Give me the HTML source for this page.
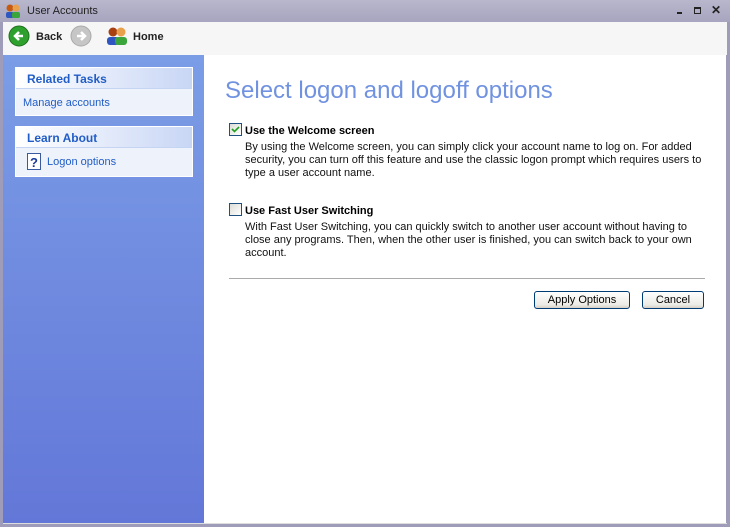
<!DOCTYPE html>
<html><head><style>
*{margin:0;padding:0;box-sizing:border-box}
body{width:730px;height:527px;position:relative;overflow:hidden;background:#9e9cb8;font-family:"Liberation Sans",sans-serif;font-size:11px}
.title{position:absolute;left:0;top:0;width:730px;height:22px;background:linear-gradient(#b9b7cc,#a7a5bf);}
.title span{position:absolute;left:27px;top:5px;color:#222;font-size:11px}
.tb{position:absolute;left:3px;top:22px;width:724px;height:33px;background:#f6f6f6}
.left{position:absolute;left:3px;top:55px;width:201px;height:468px;background:linear-gradient(#7b9de6,#6377d8)}
.main{position:absolute;left:204px;top:55px;width:522px;height:468px;background:#fff}
.box{position:absolute;left:12px;width:178px;background:#eef2fb;border:1px solid #fff}
.box .h{height:21px;background:linear-gradient(90deg,#fff,#c8d6f5);color:#215dc6;font-weight:bold;font-size:12px;padding:4px 0 0 11px;border-bottom:1px solid #c6d4f3}
.box .b{color:#215dc6;padding:8px 0 0 7px;height:26px}
h1{position:absolute;left:21px;top:22px;font-size:24px;font-weight:normal;color:#7092e0;white-space:nowrap}
.cb{position:absolute;width:13px;height:13px;border:1px solid #1c5180;background:linear-gradient(135deg,#dcdcd7,#fff)}
.lbl{position:absolute;font-weight:bold;color:#000}
.p{position:absolute;left:41px;width:466px;line-height:13px;color:#111}
.btn{position:absolute;height:18px;border:1px solid #003c74;border-radius:3px;background:linear-gradient(#fff,#ecebe6 80%,#d6d0c5);text-align:center;line-height:16px;color:#000}
</style></head><body>
<div class="title">
<svg style="position:absolute;left:5px;top:3px" width="16" height="16"><circle cx="5" cy="5" r="3.5" fill="#c55a11"/><rect x="1" y="9" width="8" height="6" rx="2" fill="#2f56c0"/><circle cx="11" cy="5" r="3.5" fill="#e8a04a"/><rect x="7" y="9" width="8" height="6" rx="2" fill="#3aa53a"/></svg>
<span>User Accounts</span>
<div style="position:absolute;left:677px;top:12px;width:5px;height:2px;background:#222"></div>
<div style="position:absolute;left:694px;top:7px;width:7px;height:7px;border:1px solid #222;border-top-width:2px"></div>
<div style="position:absolute;left:711px;top:3px;font-weight:bold;font-size:12px;color:#222">✕</div>
</div>
<div class="tb">
<svg style="position:absolute;left:5px;top:3px" width="22" height="22"><circle cx="11" cy="11" r="10" fill="#2ea02e" stroke="#1d6f1d"/><path d="M15 11H7M11 7l-4 4 4 4" stroke="#fff" stroke-width="2.5" fill="none"/></svg>
<span style="position:absolute;left:33px;top:9px;font-weight:bold;color:#222">Back</span>
<svg style="position:absolute;left:67px;top:3px" width="22" height="22"><circle cx="11" cy="11" r="10" fill="#c6c6c6" stroke="#aaa"/><path d="M7 11h8M11 7l4 4-4 4" stroke="#fff" stroke-width="2.5" fill="none"/></svg>
<svg style="position:absolute;left:102px;top:4px" width="24" height="20"><circle cx="8" cy="6" r="4.5" fill="#a84010"/><rect x="2" y="11" width="12" height="8" rx="3" fill="#2f56c0"/><circle cx="16" cy="6" r="4.5" fill="#e8a04a"/><rect x="10" y="11" width="12" height="8" rx="3" fill="#3aa53a"/></svg>
<span style="position:absolute;left:130px;top:9px;font-weight:bold;color:#222">Home</span>
</div>
<div class="left">
<div class="box" style="top:12px"><div class="h">Related Tasks</div><div class="b">Manage accounts</div></div>
<div class="box" style="top:71px"><div class="h">Learn About</div><div class="b" style="padding-left:31px;position:relative;height:28px">
<svg style="position:absolute;left:11px;top:5px" width="14" height="17"><rect x="0.5" y="0.5" width="13" height="16" fill="#fff" stroke="#3a5aa0"/><text x="3" y="14" font-size="13" font-weight="bold" fill="#1a3a9a" font-family="Liberation Sans">?</text></svg>Logon options</div></div>
</div>
<div class="main">
<h1>Select logon and logoff options</h1>
<div class="cb" style="left:25px;top:68px"><svg width="11" height="11" style="position:absolute;left:0;top:0"><path d="M2 5l2.5 2.5L9 3" stroke="#21a121" stroke-width="1.6" fill="none"/></svg></div>
<div class="lbl" style="left:41px;top:70px">Use the Welcome screen</div>
<div class="p" style="top:86px">By using the Welcome screen, you can simply click your account name to log on. For added security, you can turn off this feature and use the classic logon prompt which requires users to type a user account name.</div>
<div class="cb" style="left:25px;top:148px"></div>
<div class="lbl" style="left:41px;top:150px">Use Fast User Switching</div>
<div class="p" style="top:166px">With Fast User Switching, you can quickly switch to another user account without having to close any programs. Then, when the other user is finished, you can switch back to your own account.</div>
<div style="position:absolute;left:25px;top:223px;width:476px;height:1px;background:#aaa"></div>
<div class="btn" style="left:330px;top:236px;width:96px">Apply Options</div>
<div class="btn" style="left:438px;top:236px;width:62px">Cancel</div>
</div>
<div style="position:absolute;left:3px;top:523px;width:724px;height:1px;background:#ddd"></div>
</body></html>
